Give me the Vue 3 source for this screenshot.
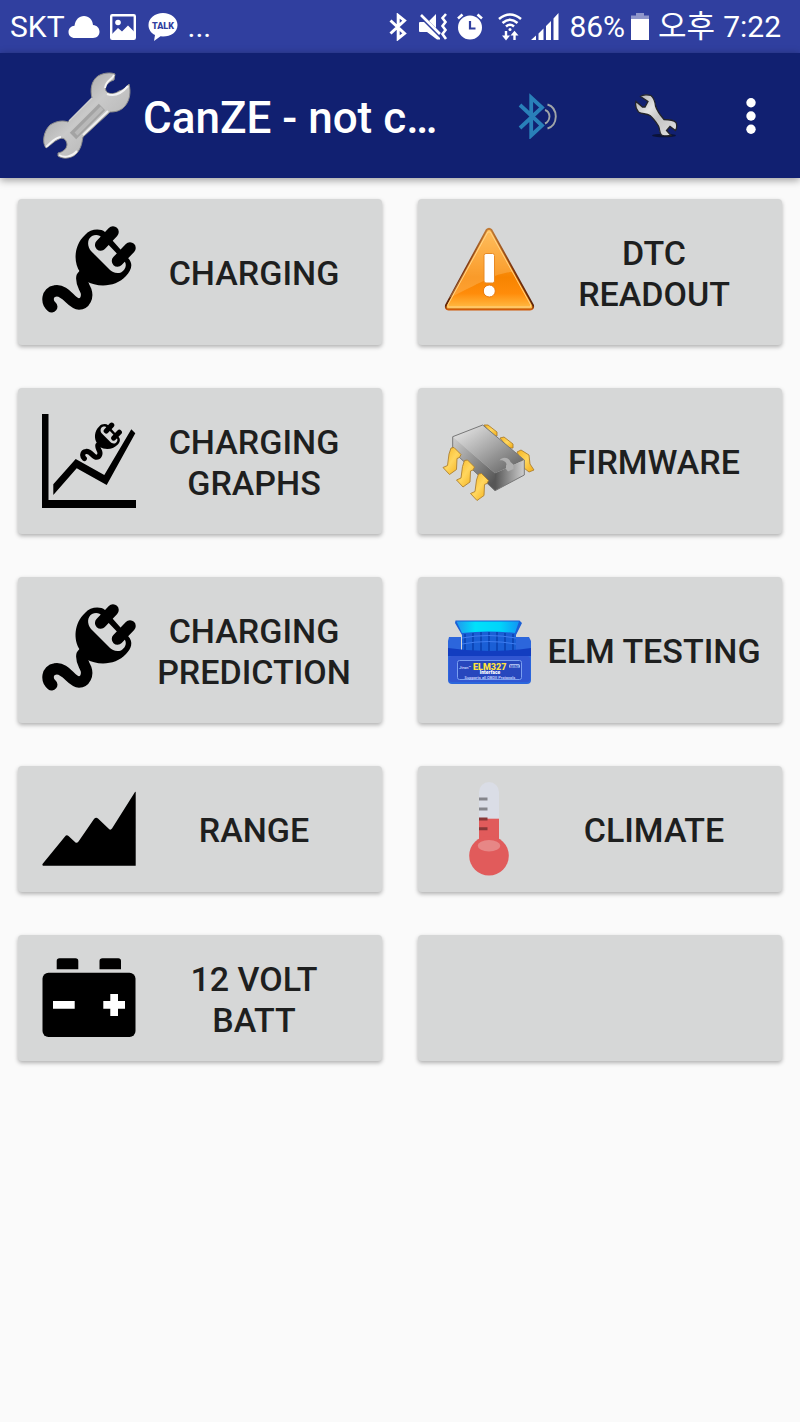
<template>
  <div class="screen">
    <div class="status-bar">
      <div class="status-group left">
        <span>SKT</span>
        <svg class="cloud" viewBox="0 0 32 24" fill="#fff">
          <path d="M7 23C3 23 .5 20.500 .5 17C.5 13.500 3 11 6.500 10.700C7.500 4.500 11 1 16 1C21 1 24.500 4.500 25 10C29 10.500 31.500 13 31.500 16.800C31.500 20.500 29 23 25 23Z" />
        </svg>
        <svg class="photo" viewBox="0 0 26 26">
          <rect x="1.200" y="1.200" width="23.600" height="23.600" rx="1" fill="none" stroke="#fff" stroke-width="2.400" />
          <circle cx="8" cy="8.500" r="2.800" fill="#fff" />
          <path d="M2 20L8 14L12 17.500L18 11.500L24 17.500V24H2Z" fill="#fff" />
        </svg>
        <svg class="talk" viewBox="0 0 30 28">
          <path d="M15 0C23 0 29.500 5 29.500 12C29.500 19 23 23.500 15 23.500L12.500 23.300L6 28L7 22C3 20 .5 16.500 .5 12C.5 5 7 0 15 0Z" fill="#fff" />
          <text x="15" y="15.500" text-anchor="middle" class="talk-text">TALK</text>
        </svg>
        <span class="more">...</span>
      </div>
      <div class="status-group right">
        <svg class="bt" viewBox="0 0 18 28" fill="none" stroke="#fff" stroke-width="3">
          <path d="M1.500 7.500L15.500 20.500L9.200 25.500V2.500L15.500 7.500L1.500 20.500" />
        </svg>
        <svg class="mute" viewBox="0 0 29 28">
          <path d="M1 9H5L21 25V26.500H18L8 19H1Q0 19 0 18V10Q0 9 1 9ZM17 1V15L10 8Z" fill="#fff" />
          <path d="M2 2L21 21" stroke="#fff" stroke-width="2.600" />
          <path d="M27 1L23.500 5L26.500 9L23.500 13L26.500 17L23.500 21L27 26" fill="none" stroke="#fff" stroke-width="2.600" />
        </svg>
        <svg class="alarm" viewBox="0 0 26 28">
          <circle cx="13" cy="14.500" r="12" fill="#fff" />
          <path d="M1 5.500L5.500 1.500M25 5.500L20.500 1.500" stroke="#fff" stroke-width="2.600" />
          <path d="M13 8V15.500H18.500" fill="none" stroke="#303f9f" stroke-width="2.200" />
        </svg>
        <svg class="wifi" viewBox="0 0 24 28" fill="none" stroke="#fff" stroke-width="2.600">
          <path d="M1 6Q12 -3 23 6M4.500 10Q12 3.500 19.500 10M8 13.500Q12 10 16 13.500" />
          <circle cx="12" cy="16.500" r="1.500" fill="#fff" stroke="none" />
          <path d="M8 18V24M16.500 21V27" stroke-width="2.400" />
          <path d="M4 22.500H12L8 27.500ZM12.500 22.500H20.500L16.500 17.800Z" fill="#fff" stroke="none" />
        </svg>
        <svg class="signal" viewBox="0 0 28 27" fill="#fff">
          <path d="M0 27L5 22.500V27ZM7.500 20.500L12.500 15.500V27H7.500ZM15 13L20 8V27H15ZM22.500 5.500L27.500 0V27H22.500Z" />
        </svg>
        <span>86%</span>
        <svg class="cell" viewBox="0 0 18 27">
          <path d="M0 2.500H5V0H13V2.500H18V7H0Z" fill="#8f96cb" />
          <rect y="6" width="18" height="21" fill="#fff" />
        </svg>
        <span class="meridiem">오후</span>
        <span>7:22</span>
      </div>
    </div>

    <header class="app-bar">
      <svg class="logo" viewBox="0 0 90 90">
        <defs>
          <linearGradient id="steel" x1="0" y1="0" x2="1" y2="1">
            <stop offset="0.300" stop-color="#b2b2b2" />
            <stop offset="0.480" stop-color="#c9c9c9" />
            <stop offset="0.600" stop-color="#c2c2c2" />
            <stop offset="1" stop-color="#aaa" />
          </linearGradient>
        </defs>
        <path d="M73 3L72 9C66 11 62 15 64 20C67 24 73 23 77 20C82 19 84 16 87 13C89 21 88 29 83 35C79 40 73 41 68 41L41 66C40 70 40 76 35 82C31 87 22 89 16 85L16 82C21 81 25 78 25 73C24 68 21 66 17 68C12 70 9 74 4 77C0 72 1 61 8 54C14 50 21 49 26 51L50 27C48 19 49 10 56 5C61 2 68 1 73 3Z" fill="url(#steel)" stroke="#8c8c8c" />
        <path d="M50 27L27 50" fill="none" stroke="#d0d0d0" stroke-width="1.500" />
        <path d="M60 36L31 65" stroke="#a3a3a3" stroke-width="9" />
        <path d="M60 37L34 63" stroke="#b9b9b9" stroke-width="4" />
        <path d="M66 40L41 64" stroke="#efefef" stroke-width="2" />
        <path d="M72 4C70 9 64 9 63 17M86 15C80 22 73 26 65 23M4 76C9 72 13 66 19 66M35 80C30 86 22 87 17 84" fill="none" stroke="#f3f3f3" stroke-width="2" />
      </svg>
      <h1 class="title">CanZE - not c…</h1>
      <button class="action" aria-label="Bluetooth">
        <svg class="action-bt" viewBox="0 0 42 46" fill="none">
          <path d="M2 12L24 32.500L13.200 42.500V4.500L24 14.500L2 35" stroke="#2980b9" stroke-width="3.800" />
          <path d="M27 17Q31 18 31.500 23.500Q31 29 27 30.500M29.500 11.500Q37.500 14 37.800 23.500Q37.500 33 29.500 35.500" stroke="#a0a5a8" stroke-width="1.900" />
        </svg>
      </button>
      <button class="action" aria-label="Settings">
        <svg class="action-wrench" viewBox="0 0 44 46">
          <defs>
            <linearGradient id="chrome" x1="0" y1="0" x2="1" y2="1">
              <stop offset="0" stop-color="#aaa" />
              <stop offset="0.350" stop-color="#e4e4e4" />
              <stop offset="0.550" stop-color="#c4c4c4" />
              <stop offset="1" stop-color="#e2e2e2" />
            </linearGradient>
          </defs>
          <ellipse cx="29" cy="42.500" rx="12" ry="1.800" fill="#0a1238" />
          <path d="M5.500 3.500C8 1.500 13 1.500 16 2.500C19 5 20 8 20.500 13C22 18 26 23 29 26.500C33 26.500 38 26.500 41 29.500C42 32 42 35 40.500 37.500L35 33.500L31.500 37.500L36 42.500C33 43 29 43 26.500 42C24 39 25 36 23.500 33C21 29 18 25 15 22.500C11 20 7 21.500 3.500 19C1 16 0 12 1 8.500L7.500 14H10L13 8.500Z" fill="url(#chrome)" stroke="#24252b" stroke-width="1.300" />
        </svg>
      </button>
      <button class="action overflow" aria-label="More options">
        <svg class="dots" viewBox="0 0 10 36" fill="#fff">
          <circle cx="5" cy="4.700" r="4.700" />
          <circle cx="5" cy="18" r="4.700" />
          <circle cx="5" cy="31.300" r="4.700" />
        </svg>
      </button>
    </header>

    <svg class="symbols" aria-hidden="true">
      <symbol id="plug" viewBox="0 0 94 94">
        <path d="M9.700 81.700C4 77 5 67 13 66C24 64 29 79 37 79C43 79 46 72 44 66C42 61 39 58 40 52L45 46" fill="none" stroke="#000" stroke-width="11.500" stroke-linecap="round" stroke-linejoin="round" />
        <path fill-rule="evenodd" d="M38 47C31 37 32 20 43 10C48 4 58 3 63 7L86 33C92 39 89 46 84 51C74 62 56 63 44 56ZM49 26C45 21 45 14 50 11C54 9 58 10 60 13L83 37C85 41 83 45 79 47.500C74 49 70 47 68 45Z" />
        <path d="M58.700 20L71 7M75.500 36L88 23" stroke="#000" stroke-width="11.500" stroke-linecap="round" />
      </symbol>
    </svg>

    <main class="grid">
      <button v-for="item in items" :key="item.id" class="tile" :class="{ short: item.short }" :aria-label="item.label || 'Empty'">
        <svg v-if="item.icon === 'plug'" class="icon" viewBox="0 0 94 94">
          <use href="#plug" width="94" height="94" />
        </svg>
        <svg v-else-if="item.icon === 'warning'" class="icon" viewBox="0 0 94 94">
          <defs>
            <linearGradient id="amber" x1="0" y1="0" x2="0" y2="1">
              <stop offset="0" stop-color="#ffb84d" />
              <stop offset="0.600" stop-color="#f78400" />
              <stop offset="0.800" stop-color="#ff8c0a" />
              <stop offset="1" stop-color="#ffc04a" />
            </linearGradient>
            <linearGradient id="rim" x1="0" y1="0" x2="0" y2="1">
              <stop offset="0" stop-color="#c07a35" />
              <stop offset="0.500" stop-color="#7c3510" />
              <stop offset="0.950" stop-color="#5e2408" />
              <stop offset="1" stop-color="#d05a08" />
            </linearGradient>
          </defs>
          <path d="M44.500 5Q47 2.500 49.500 5L91 80Q92 84.500 88 84.500H6.500Q3 84.500 4 80Z" fill="url(#amber)" stroke="url(#rim)" stroke-width="1.800" />
          <path d="M45.500 6.500L47 5L48.500 6.500L71 47C55 47 38 58 7 73Z" fill="#ffd28a" opacity="0.300" />
          <path d="M45.800 7L6 79.500V82H88.500V79.500L48.300 7Z" fill="none" stroke="#ffd488" />
          <rect x="42" y="28.500" width="10.500" height="29.500" rx="2" fill="#fff" stroke="#e88a25" />
          <circle cx="47.300" cy="66" r="6" fill="#fff" stroke="#e8780b" />
        </svg>
        <svg v-else-if="item.icon === 'graph'" class="icon" viewBox="0 0 94 94">
          <path d="M0 0H6.500V86H94V94H0Z" />
          <path d="M11.300 70.300L33.700 45L62.300 61L89.300 15.300L93.300 19.300L64.700 71L34.700 54.300L11.300 81Z" />
          <use href="#plug" x="38" y="8" width="42" height="42" />
        </svg>
        <svg v-else-if="item.icon === 'chip'" class="icon" viewBox="0 0 94 94">
          <defs>
            <linearGradient id="chipTop" x1="0" y1="0" x2="1" y2="1">
              <stop offset="0.100" stop-color="#e0e0e0" />
              <stop offset="0.500" stop-color="#a6a6a6" />
              <stop offset="0.900" stop-color="#686868" />
            </linearGradient>
            <linearGradient id="chipLeft" x1="0" y1="0" x2="1" y2="1">
              <stop offset="0" stop-color="#d0d0d0" />
              <stop offset="0.900" stop-color="#565656" />
            </linearGradient>
            <linearGradient id="chipRight">
              <stop offset="0" stop-color="#555" />
              <stop offset="1" stop-color="#cfcfcf" />
            </linearGradient>
            <linearGradient id="gold" x1="0" y1="0" x2="1" y2="1">
              <stop offset="0" stop-color="#f7b51e" />
              <stop offset="0.500" stop-color="#ffd65e" />
              <stop offset="1" stop-color="#f2ac14" />
            </linearGradient>
          </defs>
          <g fill="url(#gold)" stroke="#ae8030" stroke-width="0.900">
            <path d="M42 11L46 11L55 18V22L50 22Z" />
            <path d="M58 24L62 23L71 30V34L66 34Z" />
            <path d="M75 38L79 36L87 41L88 50L92 56L87 58L82 54Z" />
          </g>
          <path d="M10.700 22.700L40.700 11L82.300 46L53 59.300Z" fill="url(#chipTop)" />
          <path d="M10.700 22.700L53 59.300V76.700L10.700 37Z" fill="url(#chipLeft)" />
          <path d="M53 59.300L82.300 46V61L53 76.700Z" fill="url(#chipRight)" />
          <path d="M57.500 46.500C60 42.500 67 43 68.500 48L71.500 50.500V55L66 57.500L64 55V51.500C66 49 61 45.500 57.500 46.500Z" fill="#b0b0b0" />
          <path d="M10.700 22.700L40.700 11L82.300 46V61L53 76.700L10.700 37Z" fill="none" stroke="#777" />
          <g fill="url(#gold)" stroke="#ae8030" stroke-width="0.900">
            <path v-for="(p, i) in chipPins" :key="i" :transform="`translate(${p})`" d="M9 34L12 33.500L19 40.500L17.500 43.500L15 44.500L14.500 55.500L7.500 60.500L1 53.500L5.500 51.500L7 40Z" />
          </g>
        </svg>
        <svg v-else-if="item.icon === 'elm'" class="icon" viewBox="0 0 94 94">
          <defs>
            <linearGradient id="lid">
              <stop offset="0" stop-color="#2198ee" />
              <stop offset="0.300" stop-color="#00e1fa" />
              <stop offset="0.700" stop-color="#00d4fa" />
              <stop offset="1" stop-color="#1296f4" />
            </linearGradient>
          </defs>
          <path d="M7 34H19V48H74V34H87L89 38V77Q89 81 85 81H10Q6 81 6 77V38Z" fill="#2c66dc" />
          <path d="M13.500 17.500H77.500L80 20L74 32V48H20V32L13 20Z" fill="#1a5fd6" />
          <path d="M14.500 18.500H77L73 30Q46 27 20 30Z" fill="url(#lid)" />
          <path d="M23 31V47M31 30V48M39 29V48M47 29V48M55 29V48M63 30V48M71 31V47" stroke="#0d47b8" stroke-width="2" />
          <path d="M20 35Q46 30 74 35M20 41Q46 36 74 41" fill="none" stroke="#3f7cef" />
          <path d="M6 45Q46 51 89 45V53H6Z" fill="#123dc0" />
          <rect x="7" y="53" width="81" height="26" rx="3" fill="#3156d2" />
          <rect x="15.500" y="57.500" width="64" height="19" rx="2" fill="#2747bd" stroke="#7b9ff0" />
          <text x="17" y="65.500" class="elm-side">Jtron™</text>
          <text x="31" y="66.500" class="elm-name">ELM327</text>
          <rect x="67" y="61" width="11" height="4" rx="1.500" fill="#aab9ee" />
          <text x="68" y="64.800" class="elm-mini">MINI</text>
          <text x="48" y="71" text-anchor="middle" class="elm-line">Interface</text>
          <text x="48" y="75.500" text-anchor="middle" class="elm-small">Supports all OBDII Protocols</text>
        </svg>
        <svg v-else-if="item.icon === 'range'" class="icon" viewBox="0 0 94 94">
          <path d="M.5 82L23 54.500Q24.500 52.500 26.500 54L33.500 60.500Q35 61.500 36.500 59.500L52 37Q54 35 56 36.500L67 47Q68.500 48.500 70 46.500L93 10L93.700 9.700V83.700H1Q0 83 .5 82Z" />
        </svg>
        <svg v-else-if="item.icon === 'thermometer'" class="icon" viewBox="0 0 94 94">
          <path d="M37 40V10A10 10 0 0 1 57 10V40Z" fill="#dadde6" />
          <rect x="37" y="36.700" width="20" height="22" fill="#e15b5b" />
          <circle cx="47" cy="73.700" r="19.800" fill="#e15b5b" />
          <ellipse cx="47" cy="63.700" rx="11.300" ry="5.700" fill="#e78786" />
          <path d="M37 17H45.500M37 27H45.500" stroke="#85868c" stroke-width="3" />
          <path d="M37 37H45.500M37 46.700H45.500" stroke="#883737" stroke-width="3" />
        </svg>
        <svg v-else-if="item.icon === 'battery'" class="icon" viewBox="0 0 94 94">
          <path d="M14.700 18.300V10Q14.700 7.300 17.500 7.300H33.500Q36.300 7.300 36.300 10V18.300ZM57.500 18.300V10Q57.500 7.300 60.500 7.300H76.300Q79 7.300 79 10V18.300Z" />
          <rect x="0.500" y="21.700" width="93" height="64.300" rx="6" />
          <path d="M11 50H32.700V57.700H11ZM61.300 50H68.300V43H76V50H83V57.700H76V65H68.300V57.700H61.300Z" fill="#fff" />
        </svg>
        <span v-if="item.label" class="label">{{ item.label }}</span>
      </button>
    </main>
  </div>
</template>

<script setup>
const items = [
  { id: 1, label: 'CHARGING', icon: 'plug' },
  { id: 2, label: 'DTC\nREADOUT', icon: 'warning' },
  { id: 3, label: 'CHARGING\nGRAPHS', icon: 'graph' },
  { id: 4, label: 'FIRMWARE', icon: 'chip' },
  { id: 5, label: 'CHARGING\nPREDICTION', icon: 'plug' },
  { id: 6, label: 'ELM TESTING', icon: 'elm' },
  { id: 7, label: 'RANGE', icon: 'range', short: true },
  { id: 8, label: 'CLIMATE', icon: 'thermometer', short: true },
  { id: 9, label: '12 VOLT\nBATT', icon: 'battery', short: true },
  { id: 10, label: '', icon: '', short: true }
]

const chipPins = ['0 0', '13.5 12.5', '27.5 26']
</script>

<style>
body {
  margin: 0;
  background: #fafafa;
}
</style>

<style scoped>
.screen {
  min-height: 100vh;
  background: #fafafa;
  font-family: Roboto, "Noto Sans CJK KR", sans-serif;
}

svg {
  display: block;
  flex: none;
}

.status-bar {
  display: flex;
  justify-content: space-between;
  align-items: center;
  height: 53px;
  padding: 0 19px 0 10px;
  box-sizing: border-box;
  background: #303f9f;
  color: #fff;
  font-size: 30px;
  line-height: 36px;
  white-space: nowrap;
}

.status-group {
  display: flex;
  align-items: center;
}

.cloud {
  width: 32px;
  height: 24px;
  margin: 0 10px 0 3px;
}

.photo {
  width: 26px;
  height: 26px;
  margin-right: 12px;
}

.talk {
  width: 30px;
  height: 28px;
  margin-right: 10px;
}

.talk-text {
  font-size: 9px;
  font-weight: 900;
  fill: #303f9f;
}

.bt {
  width: 18px;
  height: 28px;
  margin-right: 12px;
}

.mute {
  width: 29px;
  height: 28px;
  margin-right: 9px;
}

.alarm {
  width: 26px;
  height: 28px;
  margin-right: 15px;
}

.wifi {
  width: 24px;
  height: 28px;
  margin-right: 9px;
}

.signal {
  width: 28px;
  height: 27px;
  margin-right: 10px;
}

.cell {
  width: 18px;
  height: 27px;
  margin: 0 9px 0 6px;
}

.meridiem {
  margin-right: 8px;
  font-size: 31px;
}

.app-bar {
  position: relative;
  display: flex;
  align-items: center;
  height: 125px;
  padding: 0 14px 0 42px;
  box-sizing: border-box;
  background: #112071;
  box-shadow: 0 2px 8px rgba(0, 0, 0, 0.4);
}

.logo {
  width: 90px;
  height: 90px;
}

.title {
  flex: 1;
  min-width: 0;
  margin: 0 0 0 11px;
  padding-top: 4px;
  color: #fff;
  font-size: 44px;
  font-weight: 500;
  line-height: 52px;
  white-space: nowrap;
}

.action {
  display: flex;
  justify-content: center;
  align-items: center;
  width: 118px;
  height: 100px;
  padding: 0;
  border: none;
  background: none;
  cursor: pointer;
}

.action.overflow {
  width: 70px;
}

.action-bt {
  width: 42px;
  height: 46px;
}

.action-wrench {
  width: 44px;
  height: 46px;
}

.dots {
  width: 10px;
  height: 36px;
}

.symbols {
  position: absolute;
  width: 0;
  height: 0;
}

.grid {
  display: grid;
  grid-template-columns: 1fr 1fr;
  gap: 43px 36px;
  padding: 21px 18px;
}

.tile {
  display: flex;
  align-items: center;
  min-height: 146px;
  padding: 0 10px 0 24px;
  border: none;
  border-radius: 4px;
  background: #d6d7d7;
  box-shadow: 0 2px 4px rgba(0, 0, 0, 0.3);
  color: #1e1f1f;
  font-family: inherit;
  font-size: 34px;
  font-weight: 500;
  line-height: 41px;
  cursor: pointer;
}

.tile.short {
  min-height: 126px;
}

.icon {
  width: 94px;
  height: 94px;
}

.label {
  flex: 1;
  padding-top: 3px;
  text-align: center;
  white-space: pre-line;
}

.elm-side {
  font-size: 4px;
  fill: #d5ddff;
}

.elm-name {
  font-size: 9px;
  font-weight: 900;
  fill: #ffe23c;
}

.elm-mini {
  font-size: 4px;
  font-weight: 700;
  fill: #2747bd;
}

.elm-line {
  font-size: 5px;
  font-weight: 900;
  fill: #fff;
}

.elm-small {
  font-size: 4px;
  fill: #d5ddff;
}
</style>
